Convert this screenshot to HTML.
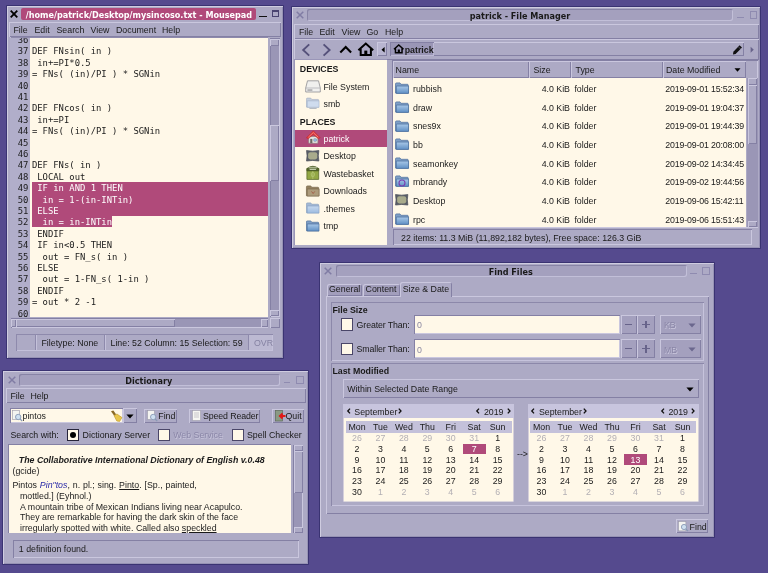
<!DOCTYPE html>
<html><head><meta charset="utf-8"><title>Desktop</title>
<style>
html,body{margin:0;padding:0}
body{width:768px;height:573px;overflow:hidden;background:#554a8e;position:relative;font-family:"Liberation Sans",sans-serif;font-size:8.8px;color:#1a1a1a}
div{position:absolute;box-sizing:border-box}
.t{white-space:pre;line-height:12px;height:12px}
.u{font-family:"Liberation Sans",sans-serif;font-size:8.8px}
.b{font-weight:bold}
.ti{font-family:"DejaVu Sans",sans-serif;font-weight:bold;font-size:8.1px}
.m{font-family:"DejaVu Sans Mono",monospace;font-size:8.9px}
.win{background:#adaac5;box-shadow:inset 1px 1px 0 #cfcce0,inset -1px -1px 0 #9692b4,0 0 0 0.8px #352f6c}
.out{background:#adaac5;box-shadow:inset 1px 1px 0 #cac7de,inset -1px -1px 0 #8480a4}
.in{box-shadow:inset 1px 1px 0 #8480a4,inset -1px -1px 0 #cac7de}
.tb{background:#a4a0be;box-shadow:inset 1px 1px 0 #8884a6,inset -1px -1px 0 #c2bfd8;border-radius:2px}
.cream{background:#fff8e8}
.pink{background:#b04a7a}
.tr{background:#9a96b6}
.g{color:#8a87a0}
.w{color:#fff}
svg{position:absolute;overflow:visible}
</style></head><body>
<div style="left:0;top:0;width:768px;height:573px;will-change:transform">

<svg width="0" height="0" style="left:0;top:0"><defs>
<linearGradient id="fg" x1="0" y1="0" x2="0" y2="1"><stop offset="0" stop-color="#a9c8e8"/><stop offset="1" stop-color="#5f8fc4"/></linearGradient>
<linearGradient id="fl" x1="0" y1="0" x2="0" y2="1"><stop offset="0" stop-color="#c6d8ee"/><stop offset="1" stop-color="#9dbbe0"/></linearGradient>
<symbol id="fold" viewBox="0 0 16 14"><path d="M0.5 2.2 Q0.5 1 1.6 1 L5.6 1 L6.8 2.6 L14 2.6 Q15 2.6 15 3.6 L15 12.6 L0.5 12.6 Z" fill="#7f9fc6" stroke="#4d6f9c" stroke-width="0.8"/><path d="M1.4 4.6 L15.4 4.6 L15.4 13 L1.4 13 Z" fill="url(#fg)" stroke="#44699a" stroke-width="0.8"/></symbol>
<symbol id="folds" viewBox="0 0 16 14"><path d="M0.5 2.2 Q0.5 1 1.6 1 L5.6 1 L6.8 2.6 L14 2.6 Q15 2.6 15 3.6 L15 11.6 L0.5 11.6 Z" fill="#c5cedb" stroke="#a9b4c6" stroke-width="0.8"/><path d="M1.4 4.2 L15.4 4.2 L15.4 11.8 L1.4 11.8 Z" fill="#cfdcee" stroke="#a3b4cc" stroke-width="0.8"/><path d="M4 13.2 L12.5 13.2" stroke="#a8b0bc" stroke-width="1"/></symbol>
<symbol id="foldl" viewBox="0 0 16 14"><path d="M0.5 2.2 Q0.5 1 1.6 1 L5.6 1 L6.8 2.6 L14 2.6 Q15 2.6 15 3.6 L15 12.6 L0.5 12.6 Z" fill="#a3b8d4" stroke="#8aa0c0" stroke-width="0.8"/><path d="M1.4 4.6 L15.4 4.6 L15.4 13 L1.4 13 Z" fill="url(#fl)" stroke="#86a0c6" stroke-width="0.8"/></symbol>
</defs></svg>
<div class="win" style="left:7.00px;top:6.00px;width:276.00px;height:352.00px;"></div>
<svg style="left:10.40px;top:9.70px" width="8" height="8" viewBox="0 0 8 8"><path d="M0.7 0.7 L7.3 7.3 M7.3 0.7 L0.7 7.3" stroke="#000" stroke-width="1.8" fill="none"/></svg>
<div class="pink" style="left:21.00px;top:7.60px;width:235.00px;height:12.80px;border-radius:2px"></div>
<div class="t ti w" style="left:25.80px;top:8.50px;">/home/patrick/Desktop/mysincoso.txt - Mousepad</div>
<div class="" style="left:258.50px;top:15.60px;width:8.00px;height:1.80px;background:#111"></div>
<div class="" style="left:272.00px;top:10.00px;width:7.20px;height:7.40px;border:1px solid #4a4470;border-top-width:2.4px"></div>
<div class="out" style="left:9.00px;top:21.60px;width:272.00px;height:15.40px;"></div>
<div class="t u" style="left:13.50px;top:23.80px;">File</div>
<div class="t u" style="left:34.50px;top:23.80px;">Edit</div>
<div class="t u" style="left:56.50px;top:23.80px;">Search</div>
<div class="t u" style="left:90.50px;top:23.80px;">View</div>
<div class="t u" style="left:116.00px;top:23.80px;">Document</div>
<div class="t u" style="left:162.00px;top:23.80px;">Help</div>
<div class="" style="left:9.50px;top:37.10px;width:258.80px;height:280.40px;box-shadow:inset 0.8px 0 0 #cfcce0,inset 0 1px 0 #8e8aac,inset -1px -1px 0 #cac7de"></div>
<div class="cream" style="left:10.3px;top:37.6px;width:257.5px;height:279.4px;overflow:hidden">
<div style="left:0;top:0;width:19.3px;height:279.4px;background:#b1aeca"></div>
<div class="pink" style="left:21.5px;top:144.10px;width:236.0px;height:34.20px"></div>
<div class="pink" style="left:21.5px;top:178.30px;width:80.40px;height:11.40px"></div>
<div class="t m" style="left:0;width:18.1px;text-align:right;top:-2.60px;line-height:11.4px;height:11.4px">36</div>
<div class="t m" style="left:0;width:18.1px;text-align:right;top:8.80px;line-height:11.4px;height:11.4px">37</div>
<div class="t m" style="left:21.6px;top:8.80px;line-height:11.4px;height:11.4px">DEF FNsin( in )</div>
<div class="t m" style="left:0;width:18.1px;text-align:right;top:20.20px;line-height:11.4px;height:11.4px">38</div>
<div class="t m" style="left:21.6px;top:20.20px;line-height:11.4px;height:11.4px"> in+=PI*0.5</div>
<div class="t m" style="left:0;width:18.1px;text-align:right;top:31.60px;line-height:11.4px;height:11.4px">39</div>
<div class="t m" style="left:21.6px;top:31.60px;line-height:11.4px;height:11.4px">= FNs( (in)/PI ) * SGNin</div>
<div class="t m" style="left:0;width:18.1px;text-align:right;top:43.00px;line-height:11.4px;height:11.4px">40</div>
<div class="t m" style="left:0;width:18.1px;text-align:right;top:54.40px;line-height:11.4px;height:11.4px">41</div>
<div class="t m" style="left:0;width:18.1px;text-align:right;top:65.80px;line-height:11.4px;height:11.4px">42</div>
<div class="t m" style="left:21.6px;top:65.80px;line-height:11.4px;height:11.4px">DEF FNcos( in )</div>
<div class="t m" style="left:0;width:18.1px;text-align:right;top:77.20px;line-height:11.4px;height:11.4px">43</div>
<div class="t m" style="left:21.6px;top:77.20px;line-height:11.4px;height:11.4px"> in+=PI</div>
<div class="t m" style="left:0;width:18.1px;text-align:right;top:88.60px;line-height:11.4px;height:11.4px">44</div>
<div class="t m" style="left:21.6px;top:88.60px;line-height:11.4px;height:11.4px">= FNs( (in)/PI ) * SGNin</div>
<div class="t m" style="left:0;width:18.1px;text-align:right;top:100.00px;line-height:11.4px;height:11.4px">45</div>
<div class="t m" style="left:0;width:18.1px;text-align:right;top:111.40px;line-height:11.4px;height:11.4px">46</div>
<div class="t m" style="left:0;width:18.1px;text-align:right;top:122.80px;line-height:11.4px;height:11.4px">47</div>
<div class="t m" style="left:21.6px;top:122.80px;line-height:11.4px;height:11.4px">DEF FNs( in )</div>
<div class="t m" style="left:0;width:18.1px;text-align:right;top:134.20px;line-height:11.4px;height:11.4px">48</div>
<div class="t m" style="left:21.6px;top:134.20px;line-height:11.4px;height:11.4px"> LOCAL out</div>
<div class="t m" style="left:0;width:18.1px;text-align:right;top:145.60px;line-height:11.4px;height:11.4px">49</div>
<div class="t m w" style="left:21.6px;top:145.60px;line-height:11.4px;height:11.4px"> IF in AND 1 THEN</div>
<div class="t m" style="left:0;width:18.1px;text-align:right;top:157.00px;line-height:11.4px;height:11.4px">50</div>
<div class="t m w" style="left:21.6px;top:157.00px;line-height:11.4px;height:11.4px">  in = 1-(in-INTin)</div>
<div class="t m" style="left:0;width:18.1px;text-align:right;top:168.40px;line-height:11.4px;height:11.4px">51</div>
<div class="t m w" style="left:21.6px;top:168.40px;line-height:11.4px;height:11.4px"> ELSE</div>
<div class="t m" style="left:0;width:18.1px;text-align:right;top:179.80px;line-height:11.4px;height:11.4px">52</div>
<div class="t m w" style="left:21.6px;top:179.80px;line-height:11.4px;height:11.4px">  in = in-INTin</div>
<div class="t m" style="left:0;width:18.1px;text-align:right;top:191.20px;line-height:11.4px;height:11.4px">53</div>
<div class="t m" style="left:21.6px;top:191.20px;line-height:11.4px;height:11.4px"> ENDIF</div>
<div class="t m" style="left:0;width:18.1px;text-align:right;top:202.60px;line-height:11.4px;height:11.4px">54</div>
<div class="t m" style="left:21.6px;top:202.60px;line-height:11.4px;height:11.4px"> IF in&lt;0.5 THEN</div>
<div class="t m" style="left:0;width:18.1px;text-align:right;top:214.00px;line-height:11.4px;height:11.4px">55</div>
<div class="t m" style="left:21.6px;top:214.00px;line-height:11.4px;height:11.4px">  out = FN_s( in )</div>
<div class="t m" style="left:0;width:18.1px;text-align:right;top:225.40px;line-height:11.4px;height:11.4px">56</div>
<div class="t m" style="left:21.6px;top:225.40px;line-height:11.4px;height:11.4px"> ELSE</div>
<div class="t m" style="left:0;width:18.1px;text-align:right;top:236.80px;line-height:11.4px;height:11.4px">57</div>
<div class="t m" style="left:21.6px;top:236.80px;line-height:11.4px;height:11.4px">  out = 1-FN_s( 1-in )</div>
<div class="t m" style="left:0;width:18.1px;text-align:right;top:248.20px;line-height:11.4px;height:11.4px">58</div>
<div class="t m" style="left:21.6px;top:248.20px;line-height:11.4px;height:11.4px"> ENDIF</div>
<div class="t m" style="left:0;width:18.1px;text-align:right;top:259.60px;line-height:11.4px;height:11.4px">59</div>
<div class="t m" style="left:21.6px;top:259.60px;line-height:11.4px;height:11.4px">= out * 2 -1</div>
<div class="t m" style="left:0;width:18.1px;text-align:right;top:271.00px;line-height:11.4px;height:11.4px">60</div>
</div>
<div class="tr in" style="left:269.80px;top:38.00px;width:9.80px;height:279.00px;"></div>
<div class="out" style="left:270.30px;top:38.80px;width:8.90px;height:6.80px;"></div>
<div class="out" style="left:270.30px;top:125.00px;width:8.90px;height:56.00px;"></div>
<div class="out" style="left:270.30px;top:309.80px;width:8.90px;height:6.60px;"></div>
<div class="tr in" style="left:10.50px;top:318.30px;width:257.50px;height:9.70px;"></div>
<div class="out" style="left:11.00px;top:318.80px;width:5.30px;height:8.70px;"></div>
<div class="out" style="left:16.30px;top:318.80px;width:158.70px;height:8.70px;"></div>
<div class="out" style="left:261.00px;top:318.80px;width:6.50px;height:8.70px;"></div>
<div class="out" style="left:269.80px;top:318.30px;width:9.80px;height:9.70px;"></div>
<div class="" style="left:16.00px;top:334.20px;width:257.00px;height:16.40px;box-shadow:inset 1px 1px 0 #8e8aac,inset -1px -1px 0 #c4c1da"></div>
<div class="" style="left:35.00px;top:335.20px;width:0.90px;height:14.60px;background:#8e8aac"></div>
<div class="" style="left:35.90px;top:335.20px;width:0.90px;height:14.60px;background:#c4c1da"></div>
<div class="" style="left:104.30px;top:335.20px;width:0.90px;height:14.60px;background:#8e8aac"></div>
<div class="" style="left:105.20px;top:335.20px;width:0.90px;height:14.60px;background:#c4c1da"></div>
<div class="" style="left:247.60px;top:335.20px;width:0.90px;height:14.60px;background:#8e8aac"></div>
<div class="" style="left:248.50px;top:335.20px;width:0.90px;height:14.60px;background:#c4c1da"></div>
<div class="t u" style="left:41.50px;top:337.10px;">Filetype: None</div>
<div class="t u" style="left:110.50px;top:337.10px;">Line: 52 Column: 15 Selection: 59</div>
<div class="" style="left:249.40px;top:335.20px;width:22.60px;height:14.40px;background:#bcb9d2"></div>
<div class="t u" style="left:254.00px;top:337.10px;color:#8582a2">OVR</div>
<div class="win" style="left:292.00px;top:6.50px;width:468.40px;height:241.50px;"></div>
<svg style="left:296.20px;top:10.70px" width="8" height="8" viewBox="0 0 8 8"><path d="M0.7 0.7 L7.3 7.3 M7.3 0.7 L0.7 7.3" stroke="#807ca4" stroke-width="1.5" fill="none"/></svg>
<div class="tb" style="left:307.00px;top:9.30px;width:426.00px;height:12.00px;"></div>
<div class="t ti" style="left:460.00px;width:120px;text-align:center;top:9.80px;">patrick - File Manager</div>
<div class="" style="left:737.00px;top:17.00px;width:6.50px;height:1.20px;background:#8f8bb0"></div>
<div class="" style="left:749.50px;top:11.30px;width:7.30px;height:7.30px;border:1px solid #8f8bb0;border-top-width:1.6px"></div>
<div class="out" style="left:294.00px;top:24.00px;width:465.00px;height:14.50px;"></div>
<div class="t u" style="left:299.00px;top:25.90px;">File</div>
<div class="t u" style="left:319.50px;top:25.90px;">Edit</div>
<div class="t u" style="left:341.50px;top:25.90px;">View</div>
<div class="t u" style="left:366.50px;top:25.90px;">Go</div>
<div class="t u" style="left:385.00px;top:25.90px;">Help</div>
<div class="out" style="left:294.00px;top:38.50px;width:465.00px;height:21.00px;"></div>
<div class="out" style="left:389.60px;top:41.80px;width:354.70px;height:14.70px;"></div>
<svg style="left:294px;top:38.5px" width="465" height="21" viewBox="0 0 465 21">
<path d="M15.2 5.4 L9.2 11 L15.2 16.6" stroke="#55517a" stroke-width="1.9" fill="none"/>
<path d="M29.6 5.4 L35.6 11 L29.6 16.6" stroke="#55517a" stroke-width="1.9" fill="none"/>
<path d="M46.3 13.4 L51.7 8 L57.1 13.4" stroke="#000" stroke-width="2.1" fill="none"/>
<path d="M64.4 11.3 L71.8 4.6 L79.2 11.3 M66.7 10 L66.7 16.1 L76.9 16.1 L76.9 10" stroke="#000" stroke-width="2" fill="none" stroke-linejoin="miter"/>
<rect x="70.3" y="11.6" width="3" height="4.6" fill="#000"/>
<path d="M445.6 6.2 L448 8.6 L441.6 15 L439 15.4 L439.4 12.8 Z" fill="#111"/><path d="M444.2 7.6 L446.6 10" stroke="#8f8bac" stroke-width="0.5"/>
<path d="M456.6 7.8 L459.8 10.8 L456.6 13.8 Z" fill="#67638a"/>
</svg>
<div class="out" style="left:377.30px;top:42.00px;width:9.70px;height:14.30px;background:#b8b5d0"></div>
<svg style="left:378.5px;top:41.5px" width="11" height="16" viewBox="0 0 11 16"><path d="M5.6 5 L2.5 7.8 L5.6 10.6 Z" fill="#000"/></svg>
<div class="" style="left:390.40px;top:42.00px;width:44.10px;height:14.00px;background:#9a96b6;box-shadow:inset 1px 1px 0 #8480a4,inset -1px -1px 0 #bdb9d4"></div>
<svg style="left:392.6px;top:44px" width="11.5" height="10" viewBox="0 0 14 12"><path d="M1.2 6.3 L7 1 L12.8 6.3 M3 5.4 L3 10.6 L11 10.6 L11 5.4" stroke="#000" stroke-width="1.8" fill="none"/><rect x="5.8" y="6.6" width="2.6" height="4" fill="#000"/></svg>
<div class="t u b" style="left:404.70px;top:44.00px;">patrick</div>
<div class="in" style="left:294.00px;top:59.30px;width:93.30px;height:186.20px;box-shadow:inset 1px 1px 0 #9a96b8,inset -1px -1px 0 #c6c3dc"></div>
<div class="cream" style="left:294.60px;top:60.00px;width:92.20px;height:185.00px;"></div>
<div class="t u b" style="left:299.80px;top:63.30px;">DEVICES</div>
<div class="t u" style="left:323.50px;top:81.10px;">File System</div>
<div class="t u" style="left:323.50px;top:98.20px;">smb</div>
<div class="t u b" style="left:299.80px;top:115.50px;">PLACES</div>
<div class="pink" style="left:294.60px;top:129.70px;width:92.20px;height:17.30px;"></div>
<div class="t u w" style="left:323.50px;top:132.90px;">patrick</div>
<div class="t u" style="left:323.50px;top:150.30px;">Desktop</div>
<div class="t u" style="left:323.50px;top:168.00px;">Wastebasket</div>
<div class="t u" style="left:323.50px;top:185.10px;">Downloads</div>
<div class="t u" style="left:323.50px;top:202.50px;">.themes</div>
<div class="t u" style="left:323.50px;top:220.00px;">tmp</div>
<svg style="left:305px;top:79.5px" width="16" height="13" viewBox="0 0 16 13"><path d="M2.5 0.8 L13.5 0.8 L15.3 8 L15.3 12 L0.7 12 L0.7 8 Z" fill="#f0f0ee" stroke="#8e8e92" stroke-width="0.8"/><path d="M0.7 8 L15.3 8" stroke="#a8a8ac" stroke-width="0.7"/><rect x="2.4" y="9.4" width="5" height="1.3" fill="#9a9a9e"/></svg>
<svg style="left:306.00px;top:97.30px" width="13.6" height="12.4"><use href="#folds" width="13.6" height="12.4"/></svg>
<svg style="left:305.6px;top:130.2px" width="14.6" height="14.2" viewBox="0 0 16 15"><path d="M3 7 L3 14.2 L13 14.2 L13 7 Z" fill="#ecebe6" stroke="#8a8680" stroke-width="0.7"/><path d="M0.4 8.2 L8 0.6 L15.6 8.2 L13.6 9.4 L8 4.6 L2.4 9.4 Z" fill="#e2383a" stroke="#b82a2c" stroke-width="0.5"/><path d="M2.6 7.6 L8 2.6 L13.4 7.6" fill="none" stroke="#f2a0a0" stroke-width="0.7"/><rect x="4.6" y="9.4" width="2.4" height="4.8" fill="#6c6862"/><rect x="8.6" y="9.4" width="3" height="2.6" fill="#8fb4e0" stroke="#5f6c80" stroke-width="0.4"/></svg>
<svg style="left:306px;top:150px" width="13.4" height="11.6" viewBox="0 0 15 13"><path d="M0.6 0.6 Q7.5 2 14.4 0.6 Q13.2 6.5 14.4 12.4 Q7.5 11 0.6 12.4 Q1.8 6.5 0.6 0.6 Z" fill="#5a5e68" stroke="#484c58" stroke-width="0.8"/><rect x="2.4" y="2.4" width="10.2" height="8.2" rx="2.4" fill="#a9ab8c"/></svg>
<svg style="left:305.8px;top:165.4px" width="13.6" height="15.4" viewBox="0 0 15 16"><path d="M1 3.4 L14 3.4 L14 15.4 L1 15.4 Z" fill="#93a845" stroke="#5c6e2c" stroke-width="0.9"/><path d="M1 3.4 Q7.5 -1.6 14 3.4 L14 6 L1 6 Z" fill="#55662e" stroke="#46561f" stroke-width="0.7"/><path d="M3 2.6 L12 2.6 M4 4.4 L11 4.4" stroke="#e4ead2" stroke-width="0.9"/><path d="M7.5 6.4 L7.5 15" stroke="#a9bc62" stroke-width="1.2"/><path d="M5.6 9 L7.5 7.6 L9.4 9 L8.8 12 L6.2 12 Z" fill="none" stroke="#b9ca7a" stroke-width="0.8"/></svg>
<svg style="left:306px;top:184.6px" width="13.6" height="12" viewBox="0 0 16 14"><path d="M0.5 2.2 Q0.5 1 1.6 1 L5.6 1 L6.8 2.6 L14 2.6 Q15 2.6 15 3.6 L15 12.6 L0.5 12.6 Z" fill="#93805f" stroke="#7a684c" stroke-width="0.8"/><path d="M1.4 4.6 L15.4 4.6 L15.4 13 L1.4 13 Z" fill="#ad9b7c" stroke="#7a684c" stroke-width="0.8"/><path d="M6.5 7.5 L8.4 10 L10.3 7.5" stroke="#a0503c" stroke-width="0.9" fill="none"/></svg>
<svg style="left:306.00px;top:202.20px" width="13.6" height="12"><use href="#foldl" width="13.6" height="12"/></svg>
<svg style="left:306.00px;top:219.60px" width="13.6" height="12"><use href="#fold" width="13.6" height="12"/></svg>
<div class="in" style="left:392.20px;top:60.00px;width:365.80px;height:168.00px;"></div>
<div class="cream" style="left:392.70px;top:60.50px;width:353.60px;height:166.80px;"></div>
<div class="out" style="left:392.70px;top:60.80px;width:136.10px;height:17.00px;"></div>
<div class="out" style="left:528.80px;top:60.80px;width:42.20px;height:17.00px;"></div>
<div class="out" style="left:571.00px;top:60.80px;width:91.60px;height:17.00px;"></div>
<div class="out" style="left:662.60px;top:60.80px;width:83.40px;height:17.00px;"></div>
<div class="t u" style="left:395.60px;top:64.00px;">Name</div>
<div class="t u" style="left:533.50px;top:64.00px;">Size</div>
<div class="t u" style="left:575.50px;top:64.00px;">Type</div>
<div class="t u" style="left:666.00px;top:64.00px;">Date Modified</div>
<svg style="left:733.8px;top:67.6px" width="7" height="4.2" viewBox="0 0 8 5"><path d="M0.4 0.4 L7.6 0.4 L4 4.4 Z" fill="#000"/></svg>
<svg style="left:394.60px;top:82.20px" width="14.2" height="12.3"><use href="#fold" width="14.2" height="12.3"/></svg>
<div class="t u" style="left:413.00px;top:83.10px;">rubbish</div>
<div class="t u" style="right:198.00px;top:83.10px;">4.0 KiB</div>
<div class="t u" style="left:574.40px;top:83.10px;">folder</div>
<div class="t u" style="left:665.20px;top:83.10px;letter-spacing:-0.15px">2019-09-01 15:52:34</div>
<svg style="left:394.60px;top:100.85px" width="14.2" height="12.3"><use href="#fold" width="14.2" height="12.3"/></svg>
<div class="t u" style="left:413.00px;top:101.75px;">draw</div>
<div class="t u" style="right:198.00px;top:101.75px;">4.0 KiB</div>
<div class="t u" style="left:574.40px;top:101.75px;">folder</div>
<div class="t u" style="left:665.20px;top:101.75px;letter-spacing:-0.15px">2019-09-01 19:04:37</div>
<svg style="left:394.60px;top:119.50px" width="14.2" height="12.3"><use href="#fold" width="14.2" height="12.3"/></svg>
<div class="t u" style="left:413.00px;top:120.40px;">snes9x</div>
<div class="t u" style="right:198.00px;top:120.40px;">4.0 KiB</div>
<div class="t u" style="left:574.40px;top:120.40px;">folder</div>
<div class="t u" style="left:665.20px;top:120.40px;letter-spacing:-0.15px">2019-09-01 19:44:39</div>
<svg style="left:394.60px;top:138.15px" width="14.2" height="12.3"><use href="#fold" width="14.2" height="12.3"/></svg>
<div class="t u" style="left:413.00px;top:139.05px;">bb</div>
<div class="t u" style="right:198.00px;top:139.05px;">4.0 KiB</div>
<div class="t u" style="left:574.40px;top:139.05px;">folder</div>
<div class="t u" style="left:665.20px;top:139.05px;letter-spacing:-0.15px">2019-09-01 20:08:00</div>
<svg style="left:394.60px;top:156.80px" width="14.2" height="12.3"><use href="#fold" width="14.2" height="12.3"/></svg>
<div class="t u" style="left:413.00px;top:157.70px;">seamonkey</div>
<div class="t u" style="right:198.00px;top:157.70px;">4.0 KiB</div>
<div class="t u" style="left:574.40px;top:157.70px;">folder</div>
<div class="t u" style="left:665.20px;top:157.70px;letter-spacing:-0.15px">2019-09-02 14:34:45</div>
<svg style="left:394.60px;top:175.45px" width="14.2" height="12.3"><use href="#fold" width="14.2" height="12.3"/></svg>
<svg style="left:398px;top:178.75px" width="8" height="8" viewBox="0 0 8 8"><circle cx="4" cy="4" r="3" fill="none" stroke="#7a3fb0" stroke-width="1.1"/></svg>
<div class="t u" style="left:413.00px;top:176.35px;">mbrandy</div>
<div class="t u" style="right:198.00px;top:176.35px;">4.0 KiB</div>
<div class="t u" style="left:574.40px;top:176.35px;">folder</div>
<div class="t u" style="left:665.20px;top:176.35px;letter-spacing:-0.15px">2019-09-02 19:44:56</div>
<svg style="left:395px;top:194.39999999999998px" width="13.4" height="11.6" viewBox="0 0 15 13"><path d="M0.6 0.6 Q7.5 2 14.4 0.6 Q13.2 6.5 14.4 12.4 Q7.5 11 0.6 12.4 Q1.8 6.5 0.6 0.6 Z" fill="#5a5e68" stroke="#484c58" stroke-width="0.8"/><rect x="2.4" y="2.4" width="10.2" height="8.2" rx="2.4" fill="#a9ab8c"/></svg>
<div class="t u" style="left:413.00px;top:195.00px;">Desktop</div>
<div class="t u" style="right:198.00px;top:195.00px;">4.0 KiB</div>
<div class="t u" style="left:574.40px;top:195.00px;">folder</div>
<div class="t u" style="left:665.20px;top:195.00px;letter-spacing:-0.15px">2019-09-06 15:42:11</div>
<svg style="left:394.60px;top:212.75px" width="14.2" height="12.3"><use href="#fold" width="14.2" height="12.3"/></svg>
<div class="t u" style="left:413.00px;top:213.65px;">rpc</div>
<div class="t u" style="right:198.00px;top:213.65px;">4.0 KiB</div>
<div class="t u" style="left:574.40px;top:213.65px;">folder</div>
<div class="t u" style="left:665.20px;top:213.65px;letter-spacing:-0.15px">2019-09-06 15:51:43</div>
<div class="tr" style="left:747.30px;top:78.00px;width:10.30px;height:149.30px;"></div>
<div class="out" style="left:747.60px;top:78.30px;width:9.80px;height:6.70px;"></div>
<div class="out" style="left:747.60px;top:85.00px;width:9.80px;height:59.00px;"></div>
<div class="out" style="left:747.60px;top:220.50px;width:9.80px;height:6.50px;"></div>
<div class="in" style="left:393.00px;top:229.00px;width:359.00px;height:16.00px;"></div>
<div class="t u" style="left:401.00px;top:231.90px;">22 items: 11.3 MiB (11,892,182 bytes), Free space: 126.3 GiB</div>
<div class="win" style="left:320.00px;top:262.50px;width:394.00px;height:274.70px;"></div>
<svg style="left:324.30px;top:266.80px" width="8" height="8" viewBox="0 0 8 8"><path d="M0.7 0.7 L7.3 7.3 M7.3 0.7 L0.7 7.3" stroke="#807ca4" stroke-width="1.5" fill="none"/></svg>
<div class="tb" style="left:335.50px;top:265.30px;width:351.00px;height:11.70px;"></div>
<div class="t ti" style="left:450.70px;width:120px;text-align:center;top:266.20px;">Find Files</div>
<div class="" style="left:690.00px;top:273.00px;width:6.50px;height:1.20px;background:#8f8bb0"></div>
<div class="" style="left:702.30px;top:267.00px;width:7.70px;height:7.60px;border:1px solid #8f8bb0;border-top-width:1.6px"></div>
<div class="out" style="left:326.00px;top:295.50px;width:383.00px;height:218.80px;"></div>
<div class="out" style="left:327.00px;top:284.30px;width:34.50px;height:11.70px;background:#a29ebc;border-radius:2px 2px 0 0"></div>
<div class="t u" style="left:329.00px;top:283.30px;">General</div>
<div class="out" style="left:363.00px;top:284.30px;width:36.50px;height:11.70px;background:#a29ebc;border-radius:2px 2px 0 0"></div>
<div class="t u" style="left:365.60px;top:283.30px;">Content</div>
<div class="out" style="left:399.80px;top:282.20px;width:52.50px;height:14.80px;box-shadow:inset 1px 1px 0 #cac7de,inset -1px 0 0 #8480a4;border-radius:2px 2px 0 0"></div>
<div class="t u" style="left:402.70px;top:283.30px;">Size &amp; Date</div>
<div class="in" style="left:330.70px;top:302.00px;width:372.90px;height:58.70px;box-shadow:inset 1px 1px 0 #8c88aa,inset -1px -1px 0 #c6c3dc"></div>
<div class="t u b" style="left:332.40px;top:303.90px;">File Size</div>
<div class="cream" style="left:340.50px;top:318.30px;width:12.50px;height:12.40px;border:1px solid #4a4668"></div>
<div class="t u" style="left:356.60px;top:318.80px;letter-spacing:-0.12px">Greater Than:</div>
<div class="cream in" style="left:414.20px;top:314.50px;width:206.30px;height:19.60px;"></div>
<div class="t u g" style="left:417.00px;top:319.10px;">0</div>
<div class="out" style="left:620.50px;top:314.50px;width:16.50px;height:19.60px;background:#a4a0be"></div>
<div class="out" style="left:637.00px;top:314.50px;width:17.50px;height:19.60px;background:#a4a0be"></div>
<div class="" style="left:625.00px;top:323.90px;width:7.00px;height:1.20px;background:#67638a"></div>
<div class="" style="left:642.30px;top:323.90px;width:7.40px;height:1.20px;background:#67638a"></div>
<div class="" style="left:645.40px;top:320.80px;width:1.20px;height:7.40px;background:#67638a"></div>
<div class="out" style="left:659.70px;top:314.50px;width:41.80px;height:19.60px;background:#a4a0be"></div>
<div class="t u" style="left:664.00px;top:319.10px;color:#8b87a8;text-shadow:0.7px 0.7px 0 #c9c6dc">KB</div>
<svg style="left:688px;top:322.50px" width="8" height="5" viewBox="0 0 8 5"><path d="M0.4 0.4 L7.6 0.4 L4 4.4 Z" fill="#6b678e"/></svg>
<div class="cream" style="left:340.50px;top:342.70px;width:12.50px;height:12.40px;border:1px solid #4a4668"></div>
<div class="t u" style="left:356.60px;top:343.20px;letter-spacing:-0.12px">Smaller Than:</div>
<div class="cream in" style="left:414.20px;top:338.90px;width:206.30px;height:19.60px;"></div>
<div class="t u g" style="left:417.00px;top:343.50px;">0</div>
<div class="out" style="left:620.50px;top:338.90px;width:16.50px;height:19.60px;background:#a4a0be"></div>
<div class="out" style="left:637.00px;top:338.90px;width:17.50px;height:19.60px;background:#a4a0be"></div>
<div class="" style="left:625.00px;top:348.30px;width:7.00px;height:1.20px;background:#67638a"></div>
<div class="" style="left:642.30px;top:348.30px;width:7.40px;height:1.20px;background:#67638a"></div>
<div class="" style="left:645.40px;top:345.20px;width:1.20px;height:7.40px;background:#67638a"></div>
<div class="out" style="left:659.70px;top:338.90px;width:41.80px;height:19.60px;background:#a4a0be"></div>
<div class="t u" style="left:664.00px;top:343.50px;color:#8b87a8;text-shadow:0.7px 0.7px 0 #c9c6dc">MB</div>
<svg style="left:688px;top:346.90px" width="8" height="5" viewBox="0 0 8 5"><path d="M0.4 0.4 L7.6 0.4 L4 4.4 Z" fill="#6b678e"/></svg>
<div class="in" style="left:330.70px;top:362.80px;width:372.90px;height:143.20px;box-shadow:inset 1px 1px 0 #8c88aa,inset -1px -1px 0 #c6c3dc"></div>
<div class="t u b" style="left:332.40px;top:365.10px;">Last Modified</div>
<div class="out" style="left:342.80px;top:379.30px;width:356.00px;height:19.20px;"></div>
<div class="t u" style="left:347.30px;top:383.10px;">Within Selected Date Range</div>
<svg style="left:685.5px;top:386.8px" width="8" height="5" viewBox="0 0 8 5"><path d="M0.4 0.4 L7.6 0.4 L4 4.4 Z" fill="#000"/></svg>
<div class="" style="left:343.40px;top:403.70px;width:171.10px;height:98.00px;background:#fff8e8;box-shadow:inset 0 0 0 0.6px #b9b5d0"></div>
<div class="" style="left:343.40px;top:403.70px;width:171.10px;height:14.60px;background:#c8c5de"></div>
<div class="" style="left:345.60px;top:421.30px;width:166.30px;height:11.30px;background:#c4c1da"></div>
<div class="t u" style="left:354.30px;top:405.60px;">September</div>
<div class="t u" style="left:483.90px;top:405.60px;">2019</div>
<svg style="left:346.60px;top:407.5px" width="4" height="6" viewBox="0 0 4 6"><path d="M3 0.6 L0.8 3 L3 5.4" stroke="#111" stroke-width="1.35" fill="none"/></svg>
<svg style="left:398.00px;top:407.5px" width="4" height="6" viewBox="0 0 4 6"><path d="M0.8 0.6 L3 3 L0.8 5.4" stroke="#111" stroke-width="1.35" fill="none"/></svg>
<svg style="left:476.20px;top:407.5px" width="4" height="6" viewBox="0 0 4 6"><path d="M3 0.6 L0.8 3 L3 5.4" stroke="#111" stroke-width="1.35" fill="none"/></svg>
<svg style="left:506.50px;top:407.5px" width="4" height="6" viewBox="0 0 4 6"><path d="M0.8 0.6 L3 3 L0.8 5.4" stroke="#111" stroke-width="1.35" fill="none"/></svg>
<div class="t u" style="left:297.00px;width:120px;text-align:center;top:421.40px;">Mon</div>
<div class="t u" style="left:320.43px;width:120px;text-align:center;top:421.40px;">Tue</div>
<div class="t u" style="left:343.86px;width:120px;text-align:center;top:421.40px;">Wed</div>
<div class="t u" style="left:367.29px;width:120px;text-align:center;top:421.40px;">Thu</div>
<div class="t u" style="left:390.72px;width:120px;text-align:center;top:421.40px;">Fri</div>
<div class="t u" style="left:414.15px;width:120px;text-align:center;top:421.40px;">Sat</div>
<div class="t u" style="left:437.58px;width:120px;text-align:center;top:421.40px;">Sun</div>
<div class="t u" style="left:297.00px;width:120px;text-align:center;top:432.20px;color:#b3afb4">26</div>
<div class="t u" style="left:320.43px;width:120px;text-align:center;top:432.20px;color:#b3afb4">27</div>
<div class="t u" style="left:343.86px;width:120px;text-align:center;top:432.20px;color:#b3afb4">28</div>
<div class="t u" style="left:367.29px;width:120px;text-align:center;top:432.20px;color:#b3afb4">29</div>
<div class="t u" style="left:390.72px;width:120px;text-align:center;top:432.20px;color:#b3afb4">30</div>
<div class="t u" style="left:414.15px;width:120px;text-align:center;top:432.20px;color:#b3afb4">31</div>
<div class="t u" style="left:437.58px;width:120px;text-align:center;top:432.20px;">1</div>
<div class="t u" style="left:297.00px;width:120px;text-align:center;top:442.92px;">2</div>
<div class="t u" style="left:320.43px;width:120px;text-align:center;top:442.92px;">3</div>
<div class="t u" style="left:343.86px;width:120px;text-align:center;top:442.92px;">4</div>
<div class="t u" style="left:367.29px;width:120px;text-align:center;top:442.92px;">5</div>
<div class="t u" style="left:390.72px;width:120px;text-align:center;top:442.92px;">6</div>
<div class="pink" style="left:462.55px;top:443.72px;width:23.20px;height:10.20px;"></div>
<div class="t u w" style="left:414.15px;width:120px;text-align:center;top:442.92px;">7</div>
<div class="t u" style="left:437.58px;width:120px;text-align:center;top:442.92px;">8</div>
<div class="t u" style="left:297.00px;width:120px;text-align:center;top:453.64px;">9</div>
<div class="t u" style="left:320.43px;width:120px;text-align:center;top:453.64px;">10</div>
<div class="t u" style="left:343.86px;width:120px;text-align:center;top:453.64px;">11</div>
<div class="t u" style="left:367.29px;width:120px;text-align:center;top:453.64px;">12</div>
<div class="t u" style="left:390.72px;width:120px;text-align:center;top:453.64px;">13</div>
<div class="t u" style="left:414.15px;width:120px;text-align:center;top:453.64px;">14</div>
<div class="t u" style="left:437.58px;width:120px;text-align:center;top:453.64px;">15</div>
<div class="t u" style="left:297.00px;width:120px;text-align:center;top:464.36px;">16</div>
<div class="t u" style="left:320.43px;width:120px;text-align:center;top:464.36px;">17</div>
<div class="t u" style="left:343.86px;width:120px;text-align:center;top:464.36px;">18</div>
<div class="t u" style="left:367.29px;width:120px;text-align:center;top:464.36px;">19</div>
<div class="t u" style="left:390.72px;width:120px;text-align:center;top:464.36px;">20</div>
<div class="t u" style="left:414.15px;width:120px;text-align:center;top:464.36px;">21</div>
<div class="t u" style="left:437.58px;width:120px;text-align:center;top:464.36px;">22</div>
<div class="t u" style="left:297.00px;width:120px;text-align:center;top:475.08px;">23</div>
<div class="t u" style="left:320.43px;width:120px;text-align:center;top:475.08px;">24</div>
<div class="t u" style="left:343.86px;width:120px;text-align:center;top:475.08px;">25</div>
<div class="t u" style="left:367.29px;width:120px;text-align:center;top:475.08px;">26</div>
<div class="t u" style="left:390.72px;width:120px;text-align:center;top:475.08px;">27</div>
<div class="t u" style="left:414.15px;width:120px;text-align:center;top:475.08px;">28</div>
<div class="t u" style="left:437.58px;width:120px;text-align:center;top:475.08px;">29</div>
<div class="t u" style="left:297.00px;width:120px;text-align:center;top:485.80px;">30</div>
<div class="t u" style="left:320.43px;width:120px;text-align:center;top:485.80px;color:#b3afb4">1</div>
<div class="t u" style="left:343.86px;width:120px;text-align:center;top:485.80px;color:#b3afb4">2</div>
<div class="t u" style="left:367.29px;width:120px;text-align:center;top:485.80px;color:#b3afb4">3</div>
<div class="t u" style="left:390.72px;width:120px;text-align:center;top:485.80px;color:#b3afb4">4</div>
<div class="t u" style="left:414.15px;width:120px;text-align:center;top:485.80px;color:#b3afb4">5</div>
<div class="t u" style="left:437.58px;width:120px;text-align:center;top:485.80px;color:#b3afb4">6</div>
<div class="" style="left:528.00px;top:403.70px;width:171.00px;height:98.00px;background:#fff8e8;box-shadow:inset 0 0 0 0.6px #b9b5d0"></div>
<div class="" style="left:528.00px;top:403.70px;width:171.00px;height:14.60px;background:#c8c5de"></div>
<div class="" style="left:530.20px;top:421.30px;width:166.20px;height:11.30px;background:#c4c1da"></div>
<div class="t u" style="left:538.90px;top:405.60px;">September</div>
<div class="t u" style="left:668.40px;top:405.60px;">2019</div>
<svg style="left:531.20px;top:407.5px" width="4" height="6" viewBox="0 0 4 6"><path d="M3 0.6 L0.8 3 L3 5.4" stroke="#111" stroke-width="1.35" fill="none"/></svg>
<svg style="left:582.60px;top:407.5px" width="4" height="6" viewBox="0 0 4 6"><path d="M0.8 0.6 L3 3 L0.8 5.4" stroke="#111" stroke-width="1.35" fill="none"/></svg>
<svg style="left:660.70px;top:407.5px" width="4" height="6" viewBox="0 0 4 6"><path d="M3 0.6 L0.8 3 L3 5.4" stroke="#111" stroke-width="1.35" fill="none"/></svg>
<svg style="left:691.00px;top:407.5px" width="4" height="6" viewBox="0 0 4 6"><path d="M0.8 0.6 L3 3 L0.8 5.4" stroke="#111" stroke-width="1.35" fill="none"/></svg>
<div class="t u" style="left:481.50px;width:120px;text-align:center;top:421.40px;">Mon</div>
<div class="t u" style="left:505.00px;width:120px;text-align:center;top:421.40px;">Tue</div>
<div class="t u" style="left:528.50px;width:120px;text-align:center;top:421.40px;">Wed</div>
<div class="t u" style="left:552.00px;width:120px;text-align:center;top:421.40px;">Thu</div>
<div class="t u" style="left:575.50px;width:120px;text-align:center;top:421.40px;">Fri</div>
<div class="t u" style="left:599.00px;width:120px;text-align:center;top:421.40px;">Sat</div>
<div class="t u" style="left:622.50px;width:120px;text-align:center;top:421.40px;">Sun</div>
<div class="t u" style="left:481.50px;width:120px;text-align:center;top:432.20px;color:#b3afb4">26</div>
<div class="t u" style="left:505.00px;width:120px;text-align:center;top:432.20px;color:#b3afb4">27</div>
<div class="t u" style="left:528.50px;width:120px;text-align:center;top:432.20px;color:#b3afb4">28</div>
<div class="t u" style="left:552.00px;width:120px;text-align:center;top:432.20px;color:#b3afb4">29</div>
<div class="t u" style="left:575.50px;width:120px;text-align:center;top:432.20px;color:#b3afb4">30</div>
<div class="t u" style="left:599.00px;width:120px;text-align:center;top:432.20px;color:#b3afb4">31</div>
<div class="t u" style="left:622.50px;width:120px;text-align:center;top:432.20px;">1</div>
<div class="t u" style="left:481.50px;width:120px;text-align:center;top:442.92px;">2</div>
<div class="t u" style="left:505.00px;width:120px;text-align:center;top:442.92px;">3</div>
<div class="t u" style="left:528.50px;width:120px;text-align:center;top:442.92px;">4</div>
<div class="t u" style="left:552.00px;width:120px;text-align:center;top:442.92px;">5</div>
<div class="t u" style="left:575.50px;width:120px;text-align:center;top:442.92px;">6</div>
<div class="t u" style="left:599.00px;width:120px;text-align:center;top:442.92px;">7</div>
<div class="t u" style="left:622.50px;width:120px;text-align:center;top:442.92px;">8</div>
<div class="t u" style="left:481.50px;width:120px;text-align:center;top:453.64px;">9</div>
<div class="t u" style="left:505.00px;width:120px;text-align:center;top:453.64px;">10</div>
<div class="t u" style="left:528.50px;width:120px;text-align:center;top:453.64px;">11</div>
<div class="t u" style="left:552.00px;width:120px;text-align:center;top:453.64px;">12</div>
<div class="pink" style="left:623.90px;top:454.44px;width:23.20px;height:10.20px;"></div>
<div class="t u w" style="left:575.50px;width:120px;text-align:center;top:453.64px;">13</div>
<div class="t u" style="left:599.00px;width:120px;text-align:center;top:453.64px;">14</div>
<div class="t u" style="left:622.50px;width:120px;text-align:center;top:453.64px;">15</div>
<div class="t u" style="left:481.50px;width:120px;text-align:center;top:464.36px;">16</div>
<div class="t u" style="left:505.00px;width:120px;text-align:center;top:464.36px;">17</div>
<div class="t u" style="left:528.50px;width:120px;text-align:center;top:464.36px;">18</div>
<div class="t u" style="left:552.00px;width:120px;text-align:center;top:464.36px;">19</div>
<div class="t u" style="left:575.50px;width:120px;text-align:center;top:464.36px;">20</div>
<div class="t u" style="left:599.00px;width:120px;text-align:center;top:464.36px;">21</div>
<div class="t u" style="left:622.50px;width:120px;text-align:center;top:464.36px;">22</div>
<div class="t u" style="left:481.50px;width:120px;text-align:center;top:475.08px;">23</div>
<div class="t u" style="left:505.00px;width:120px;text-align:center;top:475.08px;">24</div>
<div class="t u" style="left:528.50px;width:120px;text-align:center;top:475.08px;">25</div>
<div class="t u" style="left:552.00px;width:120px;text-align:center;top:475.08px;">26</div>
<div class="t u" style="left:575.50px;width:120px;text-align:center;top:475.08px;">27</div>
<div class="t u" style="left:599.00px;width:120px;text-align:center;top:475.08px;">28</div>
<div class="t u" style="left:622.50px;width:120px;text-align:center;top:475.08px;">29</div>
<div class="t u" style="left:481.50px;width:120px;text-align:center;top:485.80px;">30</div>
<div class="t u" style="left:505.00px;width:120px;text-align:center;top:485.80px;color:#b3afb4">1</div>
<div class="t u" style="left:528.50px;width:120px;text-align:center;top:485.80px;color:#b3afb4">2</div>
<div class="t u" style="left:552.00px;width:120px;text-align:center;top:485.80px;color:#b3afb4">3</div>
<div class="t u" style="left:575.50px;width:120px;text-align:center;top:485.80px;color:#b3afb4">4</div>
<div class="t u" style="left:599.00px;width:120px;text-align:center;top:485.80px;color:#b3afb4">5</div>
<div class="t u" style="left:622.50px;width:120px;text-align:center;top:485.80px;color:#b3afb4">6</div>
<div class="t u" style="left:517.00px;top:447.60px;">--&gt;</div>
<div class="out" style="left:675.60px;top:518.80px;width:32.90px;height:14.50px;"></div>
<svg style="left:677.6px;top:520.8px" width="11" height="11" viewBox="0 0 11 11"><rect x="0.5" y="0.5" width="7.4" height="9.4" fill="#f4f4f0" stroke="#9a98a8" stroke-width="0.6"/><circle cx="6" cy="6" r="2.6" fill="#cfe0f0" stroke="#8899b4" stroke-width="0.9"/><path d="M8 8 L10 10.2" stroke="#8899b4" stroke-width="1.2"/></svg>
<div class="t u" style="left:689.60px;top:520.90px;">Find</div>
<div class="win" style="left:3.20px;top:371.30px;width:305.20px;height:193.00px;"></div>
<svg style="left:7.60px;top:376.20px" width="8" height="8" viewBox="0 0 8 8"><path d="M0.7 0.7 L7.3 7.3 M7.3 0.7 L0.7 7.3" stroke="#807ca4" stroke-width="1.5" fill="none"/></svg>
<div class="tb" style="left:18.80px;top:373.80px;width:261.70px;height:12.20px;"></div>
<div class="t ti" style="left:88.80px;width:120px;text-align:center;top:374.50px;">Dictionary</div>
<div class="" style="left:284.00px;top:381.50px;width:6.00px;height:1.20px;background:#8f8bb0"></div>
<div class="" style="left:296.30px;top:376.40px;width:7.70px;height:7.40px;border:1px solid #8f8bb0;border-top-width:1.6px"></div>
<div class="out" style="left:5.50px;top:388.30px;width:300.90px;height:15.00px;"></div>
<div class="t u" style="left:10.40px;top:390.40px;">File</div>
<div class="t u" style="left:30.40px;top:390.40px;">Help</div>
<div class="cream in" style="left:10.40px;top:408.00px;width:112.40px;height:15.00px;"></div>
<svg style="left:12px;top:409.5px" width="11" height="12" viewBox="0 0 11 12"><rect x="0.5" y="0.5" width="7" height="9" fill="#f4f4f0" stroke="#9a98a8" stroke-width="0.6"/><circle cx="6.2" cy="7" r="2.7" fill="#cfe0f0" stroke="#8899b4" stroke-width="0.9"/><path d="M8.2 9 L10.2 11.2" stroke="#8899b4" stroke-width="1.2"/></svg>
<div class="t u" style="left:22.50px;top:410.40px;">pintos</div>
<svg style="left:109.5px;top:409.5px" width="13" height="12" viewBox="0 0 13 12"><path d="M1 1.2 L3.4 0.6 L6.2 4.6 L4.2 5.8 Z" fill="#8a6a28"/><path d="M4 5.6 L7 4 L12 7.6 L9.6 11.4 L6.8 11 Z" fill="#e8c64c" stroke="#b8942c" stroke-width="0.6"/></svg>
<div class="out" style="left:123.00px;top:408.00px;width:13.60px;height:15.40px;"></div>
<svg style="left:126px;top:414px" width="8" height="5" viewBox="0 0 8 5"><path d="M0.4 0.4 L7.6 0.4 L4 4.4 Z" fill="#000"/></svg>
<div class="out" style="left:144.10px;top:408.80px;width:32.50px;height:13.80px;"></div>
<svg style="left:147px;top:410px" width="11" height="12" viewBox="0 0 11 12"><rect x="0.5" y="0.5" width="7" height="9" fill="#f4f4f0" stroke="#9a98a8" stroke-width="0.6"/><circle cx="6.2" cy="7" r="2.7" fill="#cfe0f0" stroke="#8899b4" stroke-width="0.9"/><path d="M8.2 9 L10.2 11.2" stroke="#8899b4" stroke-width="1.2"/></svg>
<div class="t u" style="left:158.30px;top:410.40px;">Find</div>
<div class="out" style="left:189.20px;top:408.80px;width:70.60px;height:13.80px;"></div>
<svg style="left:191.5px;top:410.3px" width="9" height="11" viewBox="0 0 9 11"><rect x="0.5" y="0.5" width="8" height="10" fill="#f6f6f2" stroke="#a09eac" stroke-width="0.6"/><path d="M2 3 H7 M2 5 H7 M2 7 H7" stroke="#b4b2bc" stroke-width="0.7"/></svg>
<div class="t u" style="left:203.00px;top:410.40px;letter-spacing:-0.12px">Speed Reader</div>
<div class="out" style="left:272.00px;top:408.80px;width:31.50px;height:13.80px;"></div>
<svg style="left:274.5px;top:410px" width="11" height="12" viewBox="0 0 11 12"><rect x="0.5" y="0.5" width="7" height="10.5" fill="#8a9a84" stroke="#5c6a58" stroke-width="0.7"/><path d="M10.5 6 L6 6 M7.6 3.6 L5 6 L7.6 8.4" stroke="#e01818" stroke-width="2" fill="none"/></svg>
<div class="t u" style="left:285.50px;top:410.40px;">Quit</div>
<div class="t u" style="left:10.40px;top:428.50px;">Search with:</div>
<div class="cream" style="left:66.70px;top:428.80px;width:12.50px;height:12.50px;border:1px solid #26243a"></div>
<div style="left:69.85px;top:431.95px;width:6.2px;height:6.2px;border-radius:50%;background:#000"></div>
<div class="t u" style="left:82.60px;top:428.50px;">Dictionary Server</div>
<div class="cream" style="left:158.30px;top:428.80px;width:11.70px;height:12.50px;border:1px solid #4a4668"></div>
<div class="t u" style="left:173.20px;top:428.50px;color:#8b87a8;text-shadow:0.7px 0.7px 0 #c9c6dc">Web Service</div>
<div class="cream" style="left:232.00px;top:428.80px;width:11.80px;height:12.50px;border:1px solid #4a4668"></div>
<div class="t u" style="left:247.00px;top:428.50px;">Spell Checker</div>
<div class="in" style="left:8.00px;top:444.30px;width:283.20px;height:89.00px;"></div>
<div class="cream" style="left:8.5px;top:444.8px;width:282.3px;height:88px;overflow:hidden">
<div class="t u b" style="left:10.30px;top:9.60px;font-style:italic">The Collaborative International Dictionary of English v.0.48</div>
<div class="t u" style="left:4.00px;top:20.50px;">(gcide)</div>
<div class="t u" style="left:4.00px;top:33.80px;word-spacing:0.45px">Pintos <i style="color:#2a2aa8">Pin"tos</i>, n. pl.; sing. <u>Pinto</u>. [Sp., painted,</div>
<div class="t u" style="left:11.50px;top:45.00px;">mottled.] (Eyhnol.)</div>
<div class="t u" style="left:11.50px;top:55.90px;">A mountain tribe of Mexican Indians living near Acapulco.</div>
<div class="t u" style="left:11.50px;top:66.70px;">They are remarkable for having the dark skin of the face</div>
<div class="t u" style="left:11.50px;top:77.40px;">irregularly spotted with white. Called also <u>speckled</u></div>
</div>
<div class="tr in" style="left:293.00px;top:444.60px;width:10.40px;height:88.40px;"></div>
<div class="out" style="left:293.50px;top:445.20px;width:9.50px;height:5.80px;"></div>
<div class="out" style="left:293.50px;top:451.00px;width:9.50px;height:42.00px;"></div>
<div class="out" style="left:293.50px;top:527.00px;width:9.50px;height:5.50px;"></div>
<div class="in" style="left:12.50px;top:540.00px;width:286.50px;height:18.00px;"></div>
<div class="t u" style="left:18.80px;top:543.00px;">1 definition found.</div>
</div>
</body></html>
